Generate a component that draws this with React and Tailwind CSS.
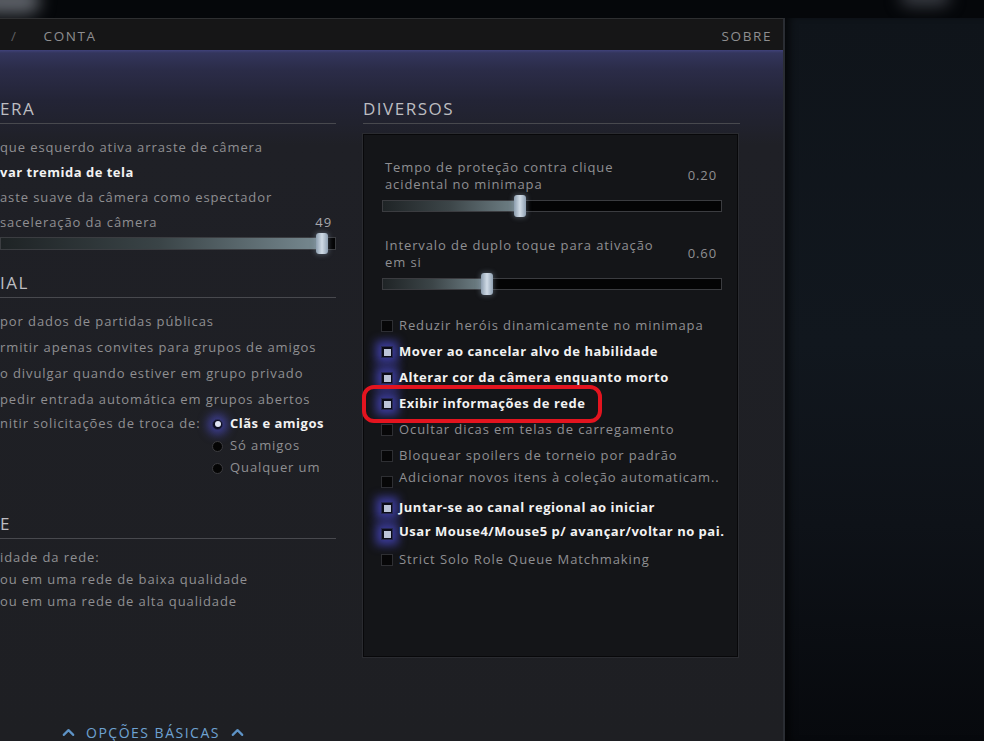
import React from "react";
import { ChevronUp } from "lucide-react";

function Box({ checked }) {
  return checked ? (
    <span className="w-[12px] h-[12px] shrink-0 bg-[#0c0c18] border border-[#262850] flex items-center justify-center shadow-[0_0_10px_5px_rgba(76,76,210,0.7)]">
      <span className="w-[7px] h-[7px] bg-[#bcc4d8]" />
    </span>
  ) : (
    <span className="w-[12px] h-[12px] shrink-0 bg-[#070708] border border-[#2e2f33]" />
  );
}

function Radio({ on }) {
  return on ? (
    <span className="w-[11px] h-[11px] rounded-full shrink-0 bg-[#0d0d22] border border-[#2a2c5a] flex items-center justify-center shadow-[0_0_10px_5px_rgba(80,80,210,0.6)]">
      <span className="w-[6px] h-[6px] rounded-full bg-[#dfe4f2]" />
    </span>
  ) : (
    <span className="w-[11px] h-[11px] rounded-full shrink-0 bg-[#050505] border border-[#3c3c40]" />
  );
}

function Slider({ fill }) {
  return (
    <div className="relative h-[12px] border border-[#3b3c40] bg-[#040405]">
      <div
        className="absolute left-0 top-0 bottom-0 bg-[linear-gradient(90deg,#1f2426_0%,#3c4548_50%,#6f8086_100%)]"
        style={{ width: fill }}
      />
      <div
        className="absolute top-[-6px] w-[12px] h-[22px] rounded-[3px] bg-[linear-gradient(90deg,#8c9dae,#d0dbe6,#8fa0b2)] shadow-[0_0_5px_1px_rgba(150,170,190,0.35)]"
        style={{ left: fill - 1 }}
      />
    </div>
  );
}

const G = "text-[#8f8f92]";
const W = "text-[#f2f2f2] font-bold tracking-[0.5px]";

export default function App() {
  const rows = [
    ["Reduzir heróis dinamicamente no minimapa", false, 0],
    ["Mover ao cancelar alvo de habilidade", true, 0],
    ["Alterar cor da câmera enquanto morto", true, 0],
    ["Exibir informações de rede", true, 0],
    ["Ocultar dicas em telas de carregamento", false, 0],
    ["Bloquear spoilers de torneio por padrão", false, 0],
    ["Adicionar novos itens à coleção automaticam..", false, -4],
    ["Juntar-se ao canal regional ao iniciar", true, 0],
    ["Usar Mouse4/Mouse5 p/ avançar/voltar no pai.", true, -2],
    ["Strict Solo Role Queue Matchmaking", false, 0],
  ];

  return (
    <div className="relative w-[984px] h-[741px] overflow-hidden bg-[#0c1016] font-['Open_Sans',sans-serif] text-[13px] tracking-[0.9px]">
      <div className="flex flex-col h-full">
        {/* top dark strip */}
        <div className="h-[18px] shrink-0 relative bg-[#05070a] overflow-hidden">
          <div className="absolute left-[-20px] top-[-12px] w-[60px] h-[26px] rounded-full bg-[#5d6168] blur-[8px]" />
          <div className="absolute left-[900px] top-[-14px] w-[50px] h-[20px] rounded-full bg-[#3a3d44] blur-[8px]" />
        </div>

        <div className="flex flex-1 min-h-0">
          {/* main panel */}
          <div className="w-[785px] shrink-0 flex flex-col border-r-2 border-[#2a2d33]">
            {/* header */}
            <div className="h-[32px] shrink-0 bg-[#161617] border-t border-[#2e2f31] flex items-center pt-[3px] pl-[11px] pr-[11px] text-[#8e8e90] text-[13.5px] tracking-[1.6px]">
              <span className="text-[#5e5e60]">/</span>
              <span className="ml-[26px]">CONTA</span>
              <span className="ml-auto">SOBRE</span>
            </div>

            {/* body */}
            <div className="flex-1 flex flex-col bg-[linear-gradient(180deg,#40427a_0px,#33355c_3px,#2b2c48_20px,#232436_50px,#1f2026_95px,#1e1f23_100%)]">
              <div className="flex">
                {/* left column */}
                <div className="w-[336px] shrink-0 flex flex-col pt-[49px]">
                  <div className="h-[25px] leading-[20px] text-[17px] text-[#bdbdc1] tracking-[1.5px] border-b border-[#48494e] pb-[4px]">ERA</div>
                  <div className="mt-[11px] flex flex-col">
                    <div className={`h-[25px] flex items-center ${G}`}>que esquerdo ativa arraste de câmera</div>
                    <div className={`h-[25px] flex items-center ${W}`}>var tremida de tela</div>
                    <div className={`h-[25px] flex items-center ${G}`}>aste suave da câmera como espectador</div>
                    <div className={`h-[25px] flex items-center justify-between pr-[4px] ${G}`}>
                      <span>saceleração da câmera</span>
                      <span className="text-[#a6a6aa]">49</span>
                    </div>
                  </div>
                  <div className="h-[16px] flex items-center">
                    <div className="relative w-full h-[13px] border border-[#3b3d41] bg-[#040405]">
                      <div className="absolute left-0 top-0 bottom-0 w-[316px] bg-[linear-gradient(90deg,#1e2325_0%,#3a4447_50%,#76888f_100%)]" />
                      <div className="absolute left-[315px] top-[-5px] w-[12px] h-[21px] rounded-[3px] bg-[linear-gradient(90deg,#8c9dae,#d0dbe6,#8fa0b2)] shadow-[0_0_5px_1px_rgba(150,170,190,0.35)]" />
                    </div>
                  </div>

                  <div className="mt-[22px] h-[25px] leading-[20px] text-[17px] text-[#bdbdc1] tracking-[1.5px] border-b border-[#48494e] pb-[4px]">IAL</div>
                  <div className="mt-[11px] flex flex-col">
                    <div className={`h-[26px] flex items-center ${G}`}>por dados de partidas públicas</div>
                    <div className={`h-[26px] flex items-center ${G}`}>rmitir apenas convites para grupos de amigos</div>
                    <div className={`h-[26px] flex items-center ${G}`}>o divulgar quando estiver em grupo privado</div>
                    <div className={`h-[26px] flex items-center ${G}`}>pedir entrada automática em grupos abertos</div>
                    <div className="h-[22px] flex items-center">
                      <span className={`w-[212px] shrink-0 ${G}`}>nitir solicitações de troca de:</span>
                      <Radio on />
                      <span className={`ml-[7px] ${W}`}>Clãs e amigos</span>
                    </div>
                    <div className="h-[22px] flex items-center pl-[212px]">
                      <Radio />
                      <span className={`ml-[7px] ${G}`}>Só amigos</span>
                    </div>
                    <div className="h-[22px] flex items-center pl-[212px]">
                      <Radio />
                      <span className={`ml-[7px] ${G}`}>Qualquer um</span>
                    </div>
                  </div>

                  <div className="mt-[35px] h-[25px] leading-[20px] text-[17px] text-[#bdbdc1] tracking-[1.5px] border-b border-[#48494e] pb-[4px]">E</div>
                  <div className="mt-[8px] flex flex-col">
                    <div className={`h-[22px] flex items-center ${G}`}>idade da rede:</div>
                    <div className={`h-[22px] flex items-center ${G}`}>ou em uma rede de baixa qualidade</div>
                    <div className={`h-[22px] flex items-center ${G}`}>ou em uma rede de alta qualidade</div>
                  </div>
                </div>

                {/* right column */}
                <div className="ml-[27px] w-[377px] shrink-0 flex flex-col pt-[49px]">
                  <div className="h-[25px] leading-[20px] text-[17px] text-[#bdbdc1] tracking-[1.5px] border-b border-[#48494e] pb-[4px]">DIVERSOS</div>
                  <div className="mt-[10px] w-[375px] h-[523px] bg-[#141518] border border-[#08080a] shadow-[0_0_0_1px_#2a2b30] flex flex-col pt-[24px]">
                    <div className="flex items-center pl-[21px] pr-[20px]">
                      <div className={`leading-[17px] ${G}`}>
                        <div>Tempo de proteção contra clique</div>
                        <div>acidental no minimapa</div>
                      </div>
                      <span className={`ml-auto ${G}`}>0.20</span>
                    </div>
                    <div className="mt-[7px] pl-[18px] pr-[15px]">
                      <Slider fill={132} />
                    </div>

                    <div className="mt-[25px] flex items-center pl-[21px] pr-[20px]">
                      <div className={`leading-[17px] ${G}`}>
                        <div>Intervalo de duplo toque para ativação</div>
                        <div>em si</div>
                      </div>
                      <span className={`ml-auto ${G}`}>0.60</span>
                    </div>
                    <div className="mt-[7px] pl-[18px] pr-[15px]">
                      <Slider fill={99} />
                    </div>

                    <div className="mt-[23px] flex flex-col pl-[17px]">
                      {rows.map(([t, c, off]) => (
                        <div key={t} className="h-[26px] flex items-center">
                          <Box checked={c} />
                          <span
                            className={`ml-[6px] whitespace-nowrap ${c ? W : G}`}
                            style={{ marginTop: off * 2 }}
                          >
                            {t}
                          </span>
                        </div>
                      ))}
                    </div>
                  </div>
                </div>
              </div>

              <div className="mt-auto h-[18px] flex items-center pl-[59px] text-[#6ea2d2] text-[14px] tracking-[1.5px]">
                <ChevronUp size={19} strokeWidth={2.75} className="text-[#5e93c6]" />
                <span className="ml-[8px]">OPÇÕES BÁSICAS</span>
                <ChevronUp size={19} strokeWidth={2.75} className="ml-[8px] text-[#5e93c6]" />
              </div>
            </div>
          </div>

          {/* right background */}
          <div className="flex-1 bg-[linear-gradient(180deg,#0f141a_0%,#11171e_45%,#0e1218_70%,#07090d_100%)] shadow-[inset_8px_0_8px_-4px_rgba(0,0,0,0.7)]" />
        </div>
      </div>

      {/* red annotation */}
      <div className="absolute left-[362px] top-[385px] w-[240px] h-[38px] border-4 border-[#e3141f] rounded-[12px] pointer-events-none" />
    </div>
  );
}
